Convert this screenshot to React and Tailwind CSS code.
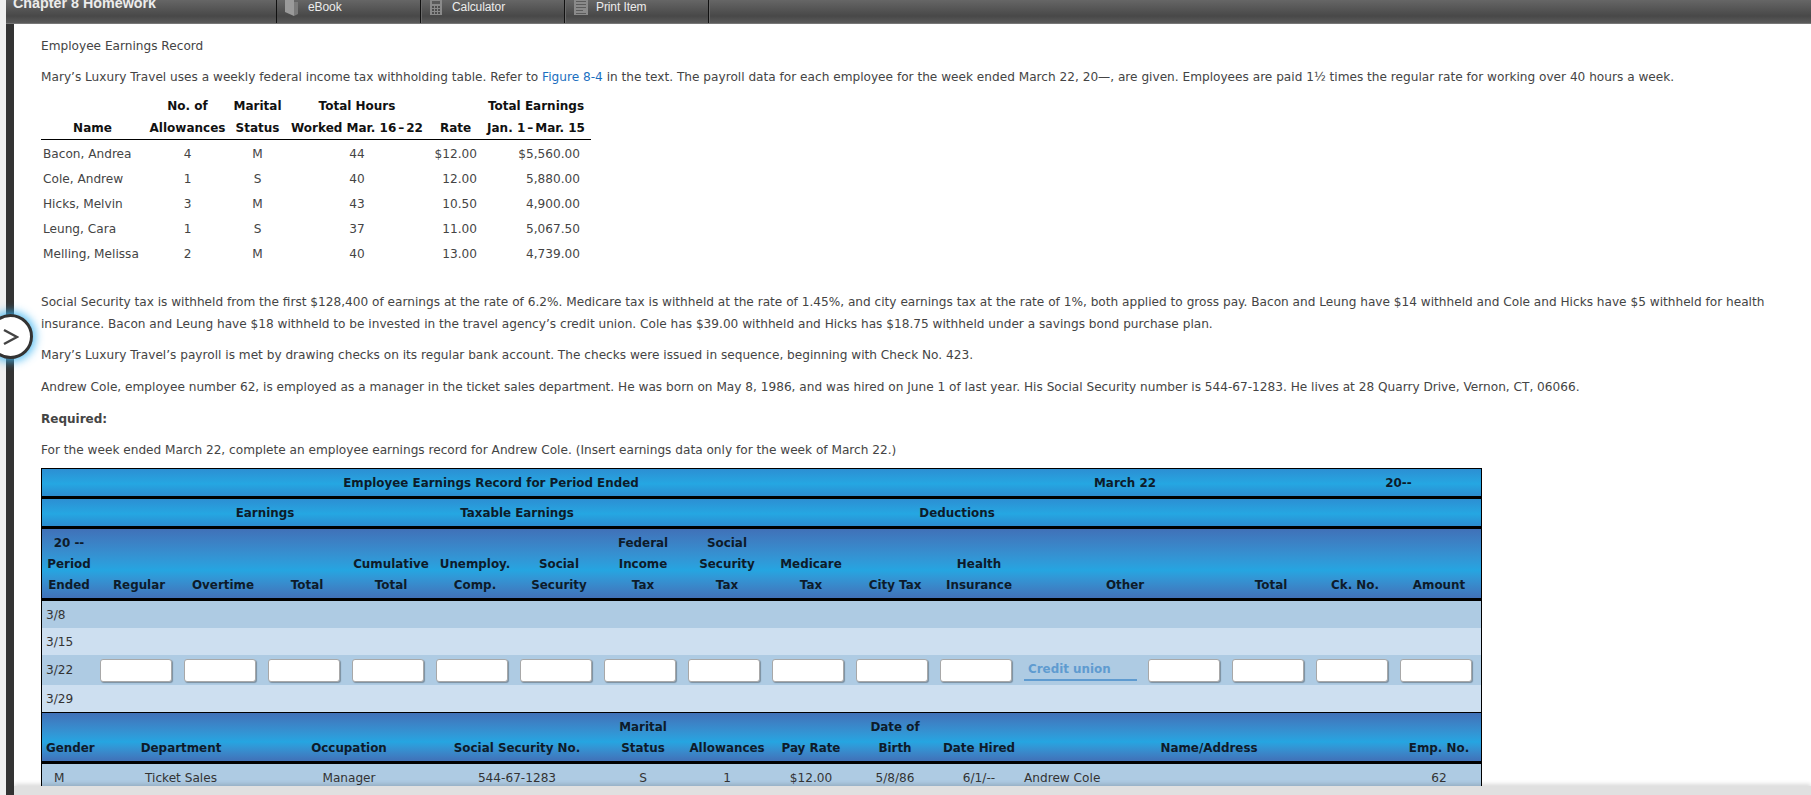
const ink = "text-[#0d1b2a]";

const intro = [
  ["Bacon, Andrea", "4", "M", "44", "$12.00", "$5,560.00"],
  ["Cole, Andrew", "1", "S", "40", "12.00", "5,880.00"],
  ["Hicks, Melvin", "3", "M", "43", "10.50", "4,900.00"],
  ["Leung, Cara", "1", "S", "37", "11.00", "5,067.50"],
  ["Melling, Melissa", "2", "M", "40", "13.00", "4,739.00"],
];

const cols = "grid grid-cols-[52px_repeat(11,84px)_124px_repeat(3,84px)_87px]";
const hCell = "pl-[6px] text-center font-bold text-[11.9px] whitespace-pre-line";
const blue = "bg-linear-to-b from-[#2c8fd3] via-[#25a7e2] via-55% to-[#2b8bd0]";
const deep = "bg-linear-to-b from-[#4071b8] via-[#25a5e1] via-60% to-[#4071b8]";

function Tab({ icon, label }) {
  return (
    <div className="flex items-start w-[144px] h-full border-r border-[#111] shadow-[1px_0_0_#6a6a6a]">
      {icon}
      <span className="text-[12px] leading-[14px] tracking-[-0.1px] text-[#ececec] font-['Liberation_Sans',sans-serif]">{label}</span>
    </div>
  );
}

function Input() {
  return (
    <div className="flex justify-start pl-[6px]">
      <input className="w-[72px] h-[23px] bg-white rounded-[3px] border border-[#a8a8a8] shadow-[1px_1px_1px_rgba(0,0,0,0.3)]" />
    </div>
  );
}

export default function App() {
  return (
    <div className="flex w-[1811px] h-[795px] overflow-hidden bg-[#f0f0f0] font-['DejaVu_Sans',sans-serif] text-[12.13px] leading-[21px] text-[#444] relative">
      <div className="w-[6px] shrink-0" />
      <div className="flex-1 flex flex-col min-w-0">
        <header className="h-[24px] shrink-0 flex items-stretch overflow-hidden bg-linear-to-b from-[#666] via-[#484848] via-70% to-[#5a5a5a] border-b border-[#777]">
          <div className="w-[270px] pl-[7px] text-[14.3px] leading-[14px] font-bold text-[#ececec] font-['Liberation_Sans',sans-serif] -mt-[4px]">Chapter 8 Homework</div>
          <div className="flex border-l border-[#111]">
            <Tab
              label="eBook"
              icon={
                <svg width="14" height="16" viewBox="0 0 14 16" className="ml-[8px] mr-[9px]">
                  <path d="M0 0h9v16L0 12z" fill="#9a9a9a" />
                  <path d="M9 2h4v12l-4 2z" fill="#7a7a7a" />
                </svg>
              }
            />
            <Tab
              label="Calculator"
              icon={
                <svg width="12" height="15" viewBox="0 0 12 15" className="ml-[9px] mr-[10px]">
                  <rect width="12" height="15" fill="#8a8a8a" />
                  <rect x="2" y="1" width="8" height="3" fill="#5a5a5a" />
                  <path d="M2 6h2v2H2zM5 6h2v2H5zM8 6h2v2H8zM2 9h2v2H2zM5 9h2v2H5zM8 9h2v2H8zM2 12h2v2H2zM5 12h2v2H5zM8 12h2v2H8z" fill="#4e4e4e" />
                </svg>
              }
            />
            <Tab
              label="Print Item"
              icon={
                <svg width="14" height="15" viewBox="0 0 14 15" className="ml-[9px] mr-[8px]">
                  <rect width="14" height="15" fill="#8a8a8a" />
                  <path d="M2 1h10v1H2zM2 4h10v1H2zM2 7h10v1H2zM2 10h7v1H2zM2 13h10v1H2z" fill="#5c5c5c" />
                </svg>
              }
            />
          </div>
        </header>

        <div className="flex-1 flex min-h-0">
          <div className="w-[8px] shrink-0 bg-[#333]" />
          <div className="flex-1 flex flex-col min-w-0">
            <main className="flex-1 min-h-0 overflow-hidden bg-white pl-[27px] pt-[12px]">
              <p>Employee Earnings Record</p>
              <p className="mt-[10px]">
                Mary’s Luxury Travel uses a weekly federal income tax withholding table. Refer to <span className="text-[#1a6fc0]">Figure 8-4</span> in the text. The payroll data for each employee for the week ended March 22, 20—, are given. Employees are paid 1½ times the regular rate for working over 40 hours a week.
              </p>

              <div className="w-[550px] mt-[7px]">
                <div className="grid grid-cols-[103px_87px_53px_146px_51px_110px] items-end font-bold text-[12px] leading-[22px] text-[#111] text-center border-b border-black">
                  <div>Name</div>
                  <div>No. of<br />Allowances</div>
                  <div>Marital<br />Status</div>
                  <div>Total Hours<br />Worked Mar. 16<span className="px-[2px]">–</span>22</div>
                  <div>Rate</div>
                  <div>Total Earnings<br />Jan. 1<span className="px-[2px]">–</span>Mar. 15</div>
                </div>
                <div className="pt-[2px]">
                  {intro.map((r) => (
                    <div key={r[0]} className="grid grid-cols-[103px_87px_53px_146px_51px_110px] h-[25px] items-center">
                      <div className="pl-[2px]">{r[0]}</div>
                      <div className="text-center">{r[1]}</div>
                      <div className="text-center">{r[2]}</div>
                      <div className="text-center">{r[3]}</div>
                      <div className="text-right pr-[4px]">{r[4]}</div>
                      <div className="text-right pr-[11px]">{r[5]}</div>
                    </div>
                  ))}
                </div>
              </div>

              <p className="mt-[24px] w-[1740px] leading-[22px]">
                Social Security tax is withheld from the first $128,400 of earnings at the rate of 6.2%. Medicare tax is withheld at the rate of 1.45%, and city earnings tax at the rate of 1%, both applied to gross pay. Bacon and Leung have $14 withheld and Cole and Hicks have $5 withheld for health insurance. Bacon and Leung have $18 withheld to be invested in the travel agency’s credit union. Cole has $39.00 withheld and Hicks has $18.75 withheld under a savings bond purchase plan.
              </p>
              <p className="mt-[10px]">Mary’s Luxury Travel’s payroll is met by drawing checks on its regular bank account. The checks were issued in sequence, beginning with Check No. 423.</p>
              <p className="mt-[11px]">Andrew Cole, employee number 62, is employed as a manager in the ticket sales department. He was born on May 8, 1986, and was hired on June 1 of last year. His Social Security number is 544-67-1283. He lives at 28 Quarry Drive, Vernon, CT, 06066.</p>
              <p className="mt-[11px] font-bold text-[12px]">Required:</p>
              <p className="mt-[10px]">For the week ended March 22, complete an employee earnings record for Andrew Cole. (Insert earnings data only for the week of March 22.)</p>

              <div className={`w-[1441px] mt-[7px] border border-black ${ink}`}>
                <div className={`${cols} ${blue} h-[30px] pt-[2px] items-center border-b-[3px] border-black`}>
                  <div className={`${hCell} col-span-11`}>Employee Earnings Record for Period Ended</div>
                  <div className={`${hCell} col-start-13 col-span-2`}>March 22</div>
                  <div className={`${hCell} col-start-16 col-span-2`}>20--</div>
                </div>
                <div className={`${cols} ${blue} h-[30px] pt-[2px] items-center border-b-[3px] border-black`}>
                  <div className={`${hCell} col-start-2 col-span-4`}>Earnings</div>
                  <div className={`${hCell} col-span-2`}>Taxable Earnings</div>
                  <div className={`${hCell} col-span-8`}>Deductions</div>
                </div>
                <div className={`${cols} ${deep} h-[72px] items-end pb-[2px] border-b-[3px] border-black`}>
                  <div className="pl-[2px] text-center font-bold text-[11.9px]">20 --<br />Period<br />Ended</div>
                  {["Regular", "Overtime", "Total", "Cumulative\nTotal", "Unemploy.\nComp.", "Social\nSecurity", "Federal\nIncome\nTax", "Social\nSecurity\nTax", "Medicare\nTax", "City Tax", "Health\nInsurance"].map((t, i) => (
                    <div key={i} className={hCell}>{t}</div>
                  ))}
                  <div className={`${hCell} col-span-2`}>Other</div>
                  <div className={hCell}>Total</div>
                  <div className={hCell}>Ck. No.</div>
                  <div className={`${hCell} pr-[3px]`}>Amount</div>
                </div>
                <div className="h-[27px] bg-[#aecbe3] pl-[4px] pt-[2px] flex items-center text-[#333]">3/8</div>
                <div className="h-[27px] bg-[#cddff0] pl-[4px] pt-[2px] flex items-center text-[#333]">3/15</div>
                <div className={`${cols} h-[30px] bg-[#aecbe3] items-center text-[#333]`}>
                  <div className="pl-[4px]">3/22</div>
                  {Array.from({ length: 11 }).map((_, i) => <Input key={i} />)}
                  <div className="ml-[6px] mr-[5px] mb-[1px] h-[22px] pl-[4px] border-b-2 border-[#5f9bd0] font-bold text-[11.9px] text-[#5f9bd0] leading-[20px]">Credit union</div>
                  {Array.from({ length: 4 }).map((_, i) => <Input key={i} />)}
                </div>
                <div className="h-[28px] bg-[#cddff0] pl-[4px] pt-[2px] flex items-center text-[#333] border-b border-black">3/29</div>
                <div className={`${cols} ${deep} h-[51px] items-end pb-[2px] border-b-[3px] border-black`}>
                  <div className="pl-[4px] font-bold text-[11.9px]">Gender</div>
                  <div className={`${hCell} col-span-2`}>Department</div>
                  <div className={`${hCell} col-span-2`}>Occupation</div>
                  <div className={`${hCell} col-span-2`}>Social Security No.</div>
                  <div className={hCell}>{"Marital\nStatus"}</div>
                  <div className={hCell}>Allowances</div>
                  <div className={hCell}>Pay Rate</div>
                  <div className={hCell}>{"Date of\nBirth"}</div>
                  <div className={hCell}>Date Hired</div>
                  <div className={`${hCell} col-span-4`}>Name/Address</div>
                  <div className={`${hCell} pr-[3px]`}>Emp. No.</div>
                </div>
                <div className={`${cols} h-[27px] pt-[2px] bg-[#aecbe3] items-center text-[#333]`}>
                  <div className="pl-[12px]">M</div>
                  <div className="pl-[6px] col-span-2 text-center">Ticket Sales</div>
                  <div className="pl-[6px] col-span-2 text-center">Manager</div>
                  <div className="pl-[6px] col-span-2 text-center">544-67-1283</div>
                  <div className="pl-[6px] text-center">S</div>
                  <div className="pl-[6px] text-center">1</div>
                  <div className="pl-[6px] text-center">$12.00</div>
                  <div className="pl-[6px] text-center">5/8/86</div>
                  <div className="pl-[6px] text-center">6/1/--</div>
                  <div className="pl-[6px] col-span-4">Andrew Cole</div>
                  <div className="text-center pl-[6px] pr-[3px]">62</div>
                </div>
              </div>
            </main>
            <div className="h-[9px] shrink-0 bg-[#e0e0e0] shadow-[0_-2px_4px_rgba(0,0,0,0.15)] z-10" />
          </div>
        </div>
      </div>

      <div className="absolute left-[-12px] top-[314px] w-[45px] h-[45px] rounded-full bg-white border-[3px] border-[#333] shadow-[0_0_8px_3px_rgba(60,180,240,0.8)] flex items-center justify-center">
        <svg width="16" height="18" viewBox="0 0 16 18">
          <path d="M1 2l13 7-13 7" fill="none" stroke="#444" strokeWidth="2.5" />
        </svg>
      </div>
    </div>
  );
}
